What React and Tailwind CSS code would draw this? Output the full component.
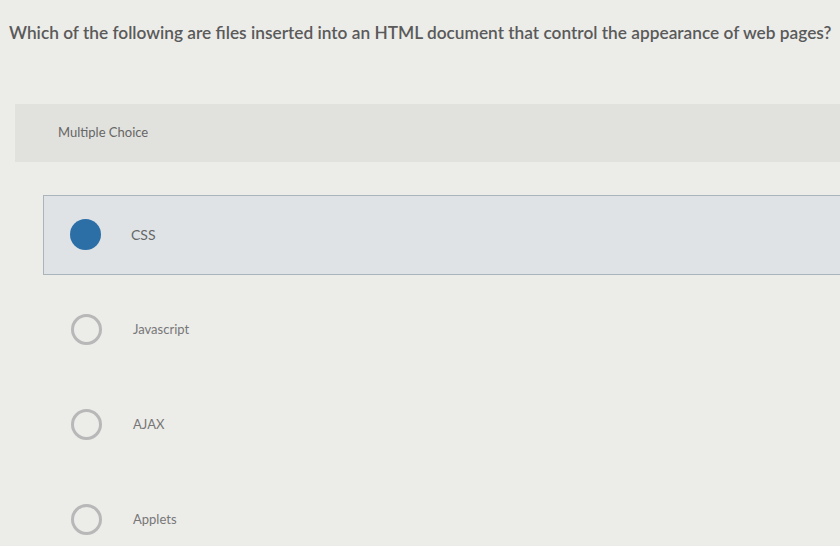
import React from "react";

const options = [
  { label: "CSS", selected: true },
  { label: "Javascript" },
  { label: "AJAX" },
  { label: "Applets" },
];

function Option({ label, selected }) {
  if (selected) {
    return (
      <div className="flex h-[80px] items-center border border-r-0 border-[#a9b4bb] bg-[#dfe3e6]">
        <span className="ml-[26px] h-[31px] w-[31px] shrink-0 rounded-full bg-[#2c6ea6]"></span>
        <span className="ml-[30px] text-[14px] text-[#666]">{label}</span>
      </div>
    );
  }
  return (
    <div className="flex h-[80px] items-center">
      <span className="ml-[28px] h-[31px] w-[31px] shrink-0 rounded-full border-[3px] border-[#b8b8b8]"></span>
      <span className="ml-[31px] text-[13px] text-[#777]">{label}</span>
    </div>
  );
}

export default function App() {
  return (
    <div
      className="h-[546px] w-[840px] overflow-hidden bg-[#ecece9]"
      style={{ fontFamily: "Lato, 'Open Sans', sans-serif" }}
    >
      <div className="whitespace-nowrap pl-[9px] pt-[20px] text-[17.3px] font-semibold text-[#5a5a5a]">
        Which of the following are files inserted into an HTML document that control the appearance of web pages?
      </div>
      <div className="ml-[15px] mt-[58px] flex h-[58px] items-center bg-[#e1e1dd] pl-[43px] text-[13px] text-[#666]">
        Multiple Choice
      </div>
      <div className="ml-[43px] flex flex-col gap-[15px] pt-[33px]">
        {options.map((o) => (
          <Option key={o.label} {...o} />
        ))}
      </div>
    </div>
  );
}
